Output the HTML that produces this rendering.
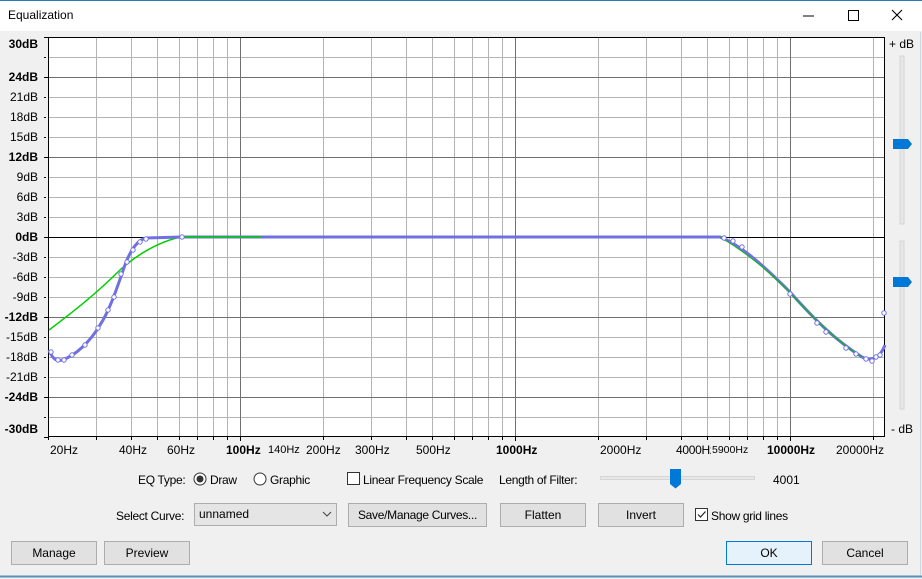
<!DOCTYPE html>
<html><head><meta charset="utf-8"><style>
*{margin:0;padding:0;box-sizing:border-box}
body{width:922px;height:579px;background:#f0f0f0;font-family:"Liberation Sans",sans-serif;font-size:12px;color:#000;position:relative;overflow:hidden}
.a{position:absolute;white-space:nowrap}
.btn{position:absolute;background:#e1e1e1;border:1px solid #adadad;text-align:center;line-height:22px;font-size:12px}
.db{position:absolute;right:884px;font-size:12px;font-weight:bold}
.s{letter-spacing:-0.3px}
</style></head><body>
<div class="a" style="left:0;top:0;width:922px;height:31px;background:#fff;border-top:1px solid #2b7bb0"></div>
<div class="a" style="left:8px;top:8px;font-size:12px">Equalization</div>
<svg class="a" style="left:790px;top:0" width="132" height="31"><path d="M13 16h11" stroke="#000"/><rect x="58.5" y="10.5" width="10" height="10" fill="none" stroke="#000"/><path d="M102 10l10 10M112 10l-10 10" stroke="#000" stroke-width="1.1"/></svg>
<svg class="a" style="left:0;top:30px" width="922" height="549">
<g transform="translate(0,-30)">
<rect x="48" y="37" width="837" height="400" fill="#fff"/>
<g stroke="#b4b4b4" stroke-width="1">
<path d="M96.5 37v400M131.5 37v400M157.5 37v400M179.5 37v400M197.5 37v400M213.5 37v400M227.5 37v400M323.5 37v400M371.5 37v400M406.5 37v400M432.5 37v400M454.5 37v400M472.5 37v400M488.5 37v400M502.5 37v400M598.5 37v400M646.5 37v400M681.5 37v400M707.5 37v400M729.5 37v400M747.5 37v400M763.5 37v400M777.5 37v400M873.5 37v400"/>
<path d="M48 57.5h837M48 97.5h837M48 117.5h837M48 137.5h837M48 177.5h837M48 197.5h837M48 217.5h837M48 257.5h837M48 277.5h837M48 297.5h837M48 337.5h837M48 357.5h837M48 377.5h837M48 417.5h837"/>
</g>
<g stroke="#707070"><path d="M240.5 37v400M515.5 37v400M790.5 37v400M48 77.5h837M48 157.5h837M48 317.5h837M48 397.5h837"/></g>
<path d="M48 237.5h837" stroke="#000"/>
<rect x="48.5" y="37.5" width="836" height="399" fill="none" stroke="#000"/>
<g stroke="#000"><path d="M44 37.5h4M44 57.5h2M44 77.5h4M44 97.5h2M44 117.5h2M44 137.5h2M44 157.5h4M44 177.5h2M44 197.5h2M44 217.5h2M44 237.5h4M44 257.5h2M44 277.5h2M44 297.5h2M44 317.5h4M44 337.5h2M44 357.5h2M44 377.5h2M44 397.5h4M44 417.5h2M44 437.5h4"/>
<path d="M48.5 437v3M96.5 437v3M131.5 437v3M157.5 437v3M179.5 437v3M197.5 437v3M213.5 437v3M227.5 437v3M240.5 437v4M323.5 437v3M371.5 437v3M406.5 437v3M432.5 437v3M454.5 437v3M472.5 437v3M488.5 437v3M502.5 437v3M515.5 437v4M598.5 437v3M646.5 437v3M681.5 437v3M707.5 437v3M729.5 437v3M747.5 437v3M763.5 437v3M777.5 437v3M790.5 437v4M873.5 437v3"/></g>
<path d="M49 330 C70 314 95 295 120 270 C140 252 160 242 180 237 L262 237" fill="none" stroke="#00d000" stroke-width="1.5"/>
<path d="M49 350 C52 358 56 362 62 360 C75 356 90 342 100 325 C110 310 118 285 126 262 C132 248 138 240 146 238 L182 237 L720 237 C740 245 760 262 790 292 C815 320 835 340 862 357 C872 362 880 358 885 345" fill="none" stroke="#7070e0" stroke-width="3"/>
<path d="M262 237 L182 237" stroke="#00d000" stroke-width="1.5"/>
<path d="M720 237 C745 252 770 272 790 293 C815 320 840 344 862 357" fill="none" stroke="#00c000" stroke-width="1"/>
<g fill="#fff" stroke="#7070e0" stroke-width="1">
<circle cx="51" cy="352" r="2.2"/><circle cx="58" cy="360" r="2.2"/><circle cx="64" cy="360" r="2.2"/><circle cx="72" cy="355" r="2.2"/><circle cx="85" cy="345" r="2.2"/><circle cx="98" cy="328" r="2.2"/><circle cx="108" cy="310" r="2.2"/><circle cx="114" cy="297" r="2.2"/><circle cx="121" cy="274" r="2.2"/><circle cx="127" cy="262" r="2.2"/><circle cx="133" cy="250" r="2.2"/><circle cx="140" cy="242" r="2.2"/><circle cx="146" cy="239" r="2.2"/><circle cx="182" cy="237" r="2.2"/><circle cx="724" cy="238" r="2.2"/><circle cx="733" cy="241" r="2.2"/><circle cx="742" cy="247" r="2.2"/><circle cx="790" cy="294" r="2.2"/><circle cx="817" cy="323" r="2.2"/><circle cx="826" cy="332" r="2.2"/><circle cx="846" cy="348" r="2.2"/><circle cx="856" cy="354" r="2.2"/><circle cx="866" cy="359" r="2.2"/><circle cx="872" cy="361" r="2.2"/><circle cx="876" cy="357" r="2.2"/><circle cx="880" cy="355" r="2.2"/><circle cx="884" cy="313" r="2.2"/>
</g>
<rect x="900" y="56" width="4" height="168" fill="#e7e7e7" stroke="#d6d6d6"/>
<rect x="900" y="241" width="4" height="168" fill="#e7e7e7" stroke="#d6d6d6"/>
<path d="M893 139h15l4 5-4 5h-15z" fill="#0078d7"/>
<path d="M893 277h15l4 5-4 5h-15z" fill="#0078d7"/>
<path d="M920.5 32v543" stroke="#cfd8de"/>
<path d="M0 576.5h922" stroke="#5a8fb8" stroke-width="2"/>
</g></svg>
<div class="a" style="left:889px;top:37px">+ dB</div>
<div class="a" style="left:891px;top:422px">- dB</div>
<div class="db" style="top:37px">30dB</div>
<div class="db" style="top:70px">24dB</div>
<div class="db" style="top:90px;font-weight:normal">21dB</div>
<div class="db" style="top:110px;font-weight:normal">18dB</div>
<div class="db" style="top:130px;font-weight:normal">15dB</div>
<div class="db" style="top:150px">12dB</div>
<div class="db" style="top:170px;font-weight:normal">9dB</div>
<div class="db" style="top:190px;font-weight:normal">6dB</div>
<div class="db" style="top:210px;font-weight:normal">3dB</div>
<div class="db" style="top:230px">0dB</div>
<div class="db" style="top:250px;font-weight:normal">-3dB</div>
<div class="db" style="top:270px;font-weight:normal">-6dB</div>
<div class="db" style="top:290px;font-weight:normal">-9dB</div>
<div class="db" style="top:310px">-12dB</div>
<div class="db" style="top:330px;font-weight:normal">-15dB</div>
<div class="db" style="top:350px;font-weight:normal">-18dB</div>
<div class="db" style="top:370px;font-weight:normal">-21dB</div>
<div class="db" style="top:390px">-24dB</div>
<div class="db" style="top:422px">-30dB</div>
<div class="a" style="left:50px;top:443px">20Hz</div>
<div class="a" style="left:119px;top:443px">40Hz</div>
<div class="a" style="left:167px;top:443px">60Hz</div>
<div class="a" style="left:226px;top:443px;font-weight:bold">100Hz</div>
<div class="a" style="left:268px;top:444px;font-size:11px">140Hz</div>
<div class="a" style="left:306px;top:443px">200Hz</div>
<div class="a" style="left:355px;top:443px">300Hz</div>
<div class="a" style="left:416px;top:443px">500Hz</div>
<div class="a" style="left:496px;top:443px;font-weight:bold">1000Hz</div>
<div class="a" style="left:600px;top:443px">2000Hz</div>
<div class="a" style="left:676px;top:443px;letter-spacing:-0.3px">4000Hz</div>
<div class="a" style="left:711px;top:444px;font-size:10.5px;background:#f0f0f0;padding-left:1px">5900Hz</div>
<div class="a" style="left:767px;top:443px;font-weight:bold">10000Hz</div>
<div class="a" style="left:836px;top:443px">20000Hz</div>

<div class="a s" style="left:138px;top:473px">EQ Type:</div>
<svg class="a" style="left:193px;top:472px" width="14" height="14"><circle cx="7" cy="7" r="6" fill="#fff" stroke="#333"/><circle cx="7" cy="7" r="3.5" fill="#333"/></svg>
<div class="a s" style="left:210px;top:473px">Draw</div>
<svg class="a" style="left:253px;top:472px" width="14" height="14"><circle cx="7" cy="7" r="6" fill="#fff" stroke="#333"/></svg>
<div class="a s" style="left:270px;top:473px">Graphic</div>
<div class="a" style="left:347px;top:472px;width:13px;height:13px;background:#fff;border:1px solid #333"></div>
<div class="a s" style="left:363px;top:473px">Linear Frequency Scale</div>
<div class="a s" style="left:499px;top:473px">Length of Filter:</div>
<div class="a" style="left:600px;top:476px;width:155px;height:4px;background:#e7e7e7;border:1px solid #d6d6d6"></div>
<svg class="a" style="left:670px;top:469px" width="11" height="20"><path d="M0 0h11v15l-5.5 4.5L0 15z" fill="#0078d7"/></svg>
<div class="a" style="left:773px;top:473px">4001</div>

<div class="a s" style="left:116px;top:509px">Select Curve:</div>
<div class="a" style="left:194px;top:503px;width:143px;height:23px;background:#e5e5e5;border:1px solid #adadad;padding:4px 4px;line-height:13px">unnamed</div>
<svg class="a" style="left:322px;top:511px" width="10" height="7"><path d="M1 1l4 4 4-4" fill="none" stroke="#444"/></svg>
<div class="btn s" style="left:348px;top:503px;width:139px;height:24px">Save/Manage Curves...</div>
<div class="btn" style="left:500px;top:503px;width:86px;height:24px">Flatten</div>
<div class="btn" style="left:598px;top:503px;width:86px;height:24px">Invert</div>
<div class="a" style="left:695px;top:508px;width:13px;height:13px;background:#fff;border:1px solid #333"></div>
<svg class="a" style="left:696px;top:509px" width="11" height="11"><path d="M2 5.5l2.5 2.5 5-5.5" fill="none" stroke="#222" stroke-width="1.2"/></svg>
<div class="a s" style="left:711px;top:509px">Show grid lines</div>

<div class="btn" style="left:11px;top:541px;width:86px;height:24px">Manage</div>
<div class="btn" style="left:104px;top:541px;width:86px;height:24px">Preview</div>
<div class="btn" style="left:726px;top:541px;width:86px;height:24px;background:#e5f1fb;border-color:#0078d7">OK</div>
<div class="btn" style="left:822px;top:541px;width:86px;height:24px">Cancel</div>
</body></html>
